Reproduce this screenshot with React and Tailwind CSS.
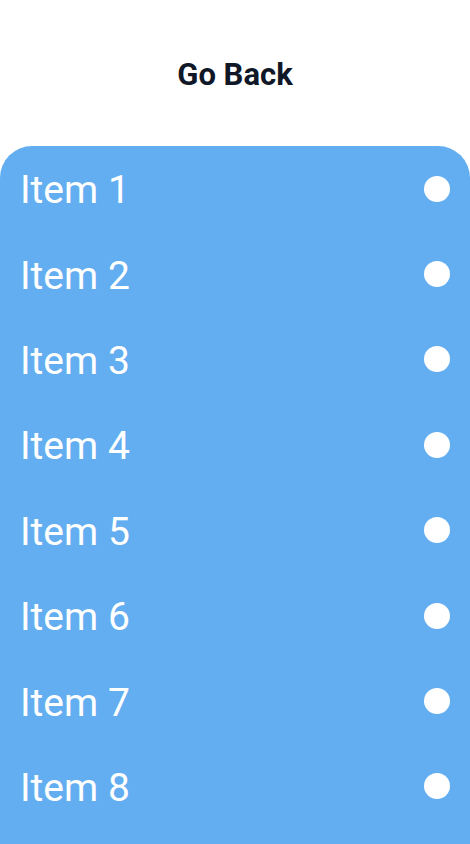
export default function App() {
  const items = [1, 2, 3, 4, 5, 6, 7, 8];
  return (
    <div className="w-[470px] h-[844px] overflow-hidden bg-white flex flex-col" style={{ fontFamily: "Roboto, sans-serif" }}>
      <div className="h-[146px] shrink-0 flex items-center justify-center">
        <button className="text-[31px] font-bold text-gray-900 leading-none pt-[3px]">Go Back</button>
      </div>
      <div className="flex-1 bg-[#63aef1] rounded-t-[32px] flex flex-col">
        {items.map((n) => (
          <div key={n} className="h-[85.4px] shrink-0 flex items-center justify-between pl-[20px] pr-[20px]">
            <span className="text-[39px] text-white leading-none pt-[4px]">Item {n}</span>
            <span className="w-[26px] h-[26px] rounded-full bg-white" />
          </div>
        ))}
      </div>
    </div>
  );
}
